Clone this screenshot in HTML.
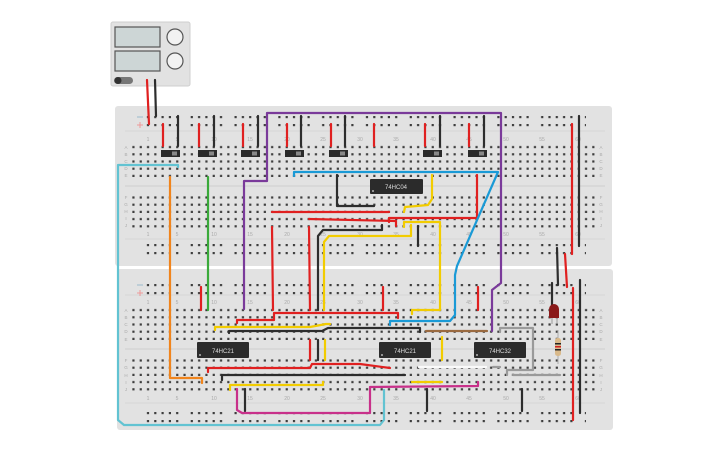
<!DOCTYPE html>
<html><head><meta charset="utf-8"><style>
html,body{margin:0;padding:0;background:#fff;width:725px;height:453px;overflow:hidden}
svg{display:block}
text{font-family:"Liberation Sans",sans-serif}
</style></head><body>
<svg width="725" height="453" viewBox="0 0 725 453" xmlns="http://www.w3.org/2000/svg">
<defs>
<pattern id="th" patternUnits="userSpaceOnUse" x="144.35" y="143.4" width="7.3" height="7.2"><rect x="2.6" y="2.6" width="2.2" height="2.2" fill="#3d3d3d"/></pattern>
<pattern id="th2" patternUnits="userSpaceOnUse" x="144.35" y="306.4" width="7.3" height="7.2"><rect x="2.6" y="2.6" width="2.2" height="2.2" fill="#3d3d3d"/></pattern>
<pattern id="rl" patternUnits="userSpaceOnUse" x="146.6" y="114" width="43.8" height="8"><g fill="#3d3d3d"><rect x="0.3" y="2" width="2.2" height="2.2"/><rect x="7.6" y="2" width="2.2" height="2.2"/><rect x="14.9" y="2" width="2.2" height="2.2"/><rect x="22.2" y="2" width="2.2" height="2.2"/><rect x="29.5" y="2" width="2.2" height="2.2"/></g></pattern>
</defs>
<!-- power supply -->
<rect x="111" y="22" width="79" height="64" rx="2" fill="#e2e2e2" stroke="#cfcfcf"/>
<rect x="115" y="27" width="45" height="20" fill="#cdd6d6" stroke="#555" stroke-width="1.2"/>
<rect x="115" y="51" width="45" height="20" fill="#cdd6d6" stroke="#555" stroke-width="1.2"/>
<circle cx="175" cy="37" r="8" fill="#f2f2f2" stroke="#555" stroke-width="1.2"/>
<circle cx="175" cy="61" r="8" fill="#f2f2f2" stroke="#555" stroke-width="1.2"/>
<rect x="114" y="77" width="19" height="7" rx="3.5" fill="#777"/><circle cx="118" cy="80.5" r="3.5" fill="#333"/>
<!-- boards -->
<rect x="115" y="106" width="497" height="160" rx="3" fill="#e2e2e2"/>
<rect x="117" y="269" width="496" height="161" rx="3" fill="#e2e2e2"/>
<g stroke="#d2d2d2" stroke-width="0.8">
<line x1="125" y1="131" x2="605" y2="131"/><line x1="125" y1="239" x2="605" y2="239"/>
<line x1="125" y1="295" x2="605" y2="295"/><line x1="125" y1="403" x2="605" y2="403"/>
</g>
<rect x="125" y="185" width="480" height="2" fill="#d8d8d8"/>
<rect x="125" y="348" width="480" height="2" fill="#d8d8d8"/>
<!-- holes -->
<rect x="130" y="143" width="467" height="36" fill="url(#th)"/>
<rect x="130" y="193.5" width="467" height="36" fill="url(#th)"/>
<rect x="130" y="306" width="467" height="36" fill="url(#th2)"/>
<rect x="130" y="356.5" width="467" height="36" fill="url(#th2)"/>
<g fill="url(#rl)">
<rect x="146" y="114" width="440" height="16"/>
<rect x="146" y="242" width="440" height="16" transform="translate(0,0)"/>
<rect x="146" y="280" width="440" height="16"/>
<rect x="146" y="407" width="440" height="16"/>
</g>
<g fill="#3d3d3d">
<rect x="146" y="243" width="0" height="0"/>
</g>
<g stroke-width="1" fill="none">
<line x1="137" y1="117" x2="143" y2="117" stroke="#9bc"/><line x1="137" y1="125" x2="143" y2="125" stroke="#e99"/><line x1="140" y1="122" x2="140" y2="128" stroke="#e99"/>
<line x1="137" y1="285" x2="143" y2="285" stroke="#9bc"/><line x1="137" y1="293" x2="143" y2="293" stroke="#e99"/><line x1="140" y1="290" x2="140" y2="296" stroke="#e99"/>
</g>
<g font-size="5" fill="#aaa" text-anchor="middle">
<text x="148" y="141">1</text><text x="177" y="141">5</text><text x="214" y="141">10</text><text x="250" y="141">15</text><text x="287" y="141">20</text><text x="323" y="141">25</text><text x="360" y="141">30</text><text x="396" y="141">35</text><text x="433" y="141">40</text><text x="469" y="141">45</text><text x="506" y="141">50</text><text x="542" y="141">55</text><text x="578" y="141">60</text>
<text x="148" y="236">1</text><text x="177" y="236">5</text><text x="214" y="236">10</text><text x="250" y="236">15</text><text x="287" y="236">20</text><text x="323" y="236">25</text><text x="360" y="236">30</text><text x="396" y="236">35</text><text x="433" y="236">40</text><text x="469" y="236">45</text><text x="506" y="236">50</text><text x="542" y="236">55</text><text x="578" y="236">60</text>
<text x="148" y="304">1</text><text x="177" y="304">5</text><text x="214" y="304">10</text><text x="250" y="304">15</text><text x="287" y="304">20</text><text x="323" y="304">25</text><text x="360" y="304">30</text><text x="396" y="304">35</text><text x="433" y="304">40</text><text x="469" y="304">45</text><text x="506" y="304">50</text><text x="542" y="304">55</text><text x="578" y="304">60</text>
<text x="148" y="400">1</text><text x="177" y="400">5</text><text x="214" y="400">10</text><text x="250" y="400">15</text><text x="287" y="400">20</text><text x="323" y="400">25</text><text x="360" y="400">30</text><text x="396" y="400">35</text><text x="433" y="400">40</text><text x="469" y="400">45</text><text x="506" y="400">50</text><text x="542" y="400">55</text><text x="578" y="400">60</text>
</g>
<g font-size="4.5" fill="#aaa" text-anchor="middle">
<text x="126" y="149">A</text><text x="126" y="156">B</text><text x="126" y="163">C</text><text x="126" y="170">D</text><text x="126" y="177">E</text>
<text x="126" y="199">F</text><text x="126" y="206">G</text><text x="126" y="213">H</text><text x="126" y="220">I</text><text x="126" y="227">J</text>
<text x="601" y="149">A</text><text x="601" y="156">B</text><text x="601" y="163">C</text><text x="601" y="170">D</text><text x="601" y="177">E</text>
<text x="601" y="199">F</text><text x="601" y="206">G</text><text x="601" y="213">H</text><text x="601" y="220">I</text><text x="601" y="227">J</text>
<text x="126" y="312">A</text><text x="126" y="319">B</text><text x="126" y="326">C</text><text x="126" y="333">D</text><text x="126" y="341">E</text>
<text x="126" y="362">F</text><text x="126" y="369">G</text><text x="126" y="377">H</text><text x="126" y="384">I</text><text x="126" y="391">J</text>
<text x="601" y="312">A</text><text x="601" y="319">B</text><text x="601" y="326">C</text><text x="601" y="333">D</text><text x="601" y="341">E</text>
<text x="601" y="362">F</text><text x="601" y="369">G</text><text x="601" y="377">H</text><text x="601" y="384">I</text><text x="601" y="391">J</text>
</g>
<!-- switches -->
<g>
<g fill="#2a2a2a"><rect x="161" y="150" width="19" height="7"/><rect x="198" y="150" width="19" height="7"/><rect x="241" y="150" width="19" height="7"/><rect x="285" y="150" width="19" height="7"/><rect x="329" y="150" width="19" height="7"/><rect x="423" y="150" width="19" height="7"/><rect x="468" y="150" width="19" height="7"/></g>
<g fill="#888"><rect x="172" y="151.5" width="5" height="4"/><rect x="209" y="151.5" width="5" height="4"/><rect x="252" y="151.5" width="5" height="4"/><rect x="296" y="151.5" width="5" height="4"/><rect x="340" y="151.5" width="5" height="4"/><rect x="434" y="151.5" width="5" height="4"/><rect x="479" y="151.5" width="5" height="4"/></g>
</g>
<!-- chips -->
<g>
<rect x="370" y="179" width="53" height="15" rx="1" fill="#2b2b2b"/><text x="396" y="189" font-size="6" fill="#ddd" text-anchor="middle">74HC04</text>
<rect x="197" y="342" width="52" height="16" rx="1" fill="#2b2b2b"/><text x="223" y="353" font-size="6" fill="#ddd" text-anchor="middle">74HC21</text>
<rect x="379" y="342" width="52" height="16" rx="1" fill="#2b2b2b"/><text x="405" y="353" font-size="6" fill="#ddd" text-anchor="middle">74HC21</text>
<rect x="474" y="342" width="52" height="16" rx="1" fill="#2b2b2b"/><text x="500" y="353" font-size="6" fill="#ddd" text-anchor="middle">74HC32</text>
<g fill="#ddd"><circle cx="373" cy="191" r="0.9"/><circle cx="200" cy="355" r="0.9"/><circle cx="382" cy="355" r="0.9"/><circle cx="477" cy="355" r="0.9"/></g>
</g>
<!-- wires -->
<g fill="none" stroke-width="2.2" stroke-linejoin="round" stroke-linecap="round">
<!-- power supply leads -->
<polyline points="147,80 149,124" stroke="#e02020"/>
<polyline points="155,80 156,116" stroke="#2d2d2d"/>
<!-- switch power -->
<g stroke="#e02020"><line x1="163" y1="124" x2="163" y2="146"/><line x1="199" y1="124" x2="199" y2="146"/><line x1="243" y1="124" x2="243" y2="146"/><line x1="287" y1="124" x2="287" y2="146"/><line x1="331" y1="124" x2="331" y2="146"/><line x1="374" y1="124" x2="374" y2="146"/><line x1="425" y1="124" x2="425" y2="146"/><line x1="469" y1="124" x2="469" y2="146"/>
<line x1="572" y1="124" x2="572" y2="254"/><line x1="565" y1="254" x2="567" y2="287"/><line x1="573" y1="288" x2="573" y2="420"/>
<line x1="477" y1="175" x2="477" y2="212"/><polyline points="477,212 477,218 389,218 389,222"/><line x1="272" y1="212" x2="389" y2="212"/>
<polyline points="309,219 396,221 396,226"/>
<line x1="272" y1="227" x2="273" y2="310"/><line x1="309" y1="227" x2="310" y2="310"/>
<line x1="310" y1="340" x2="310" y2="360"/>
<line x1="201" y1="287" x2="201" y2="310"/><line x1="383" y1="287" x2="383" y2="310"/><line x1="478" y1="287" x2="478" y2="310"/>
<polyline points="237,323 237,320 274,320 274,313 398,313 398,318"/>
<polyline points="208,372 208,368 310,368 312,364 360,364 390,368"/>
</g>
<g stroke="#2d2d2d"><line x1="178" y1="116" x2="178" y2="146"/><line x1="214" y1="116" x2="214" y2="146"/><line x1="258" y1="116" x2="258" y2="146"/><line x1="301" y1="116" x2="301" y2="146"/><line x1="345" y1="116" x2="345" y2="146"/><line x1="440" y1="116" x2="440" y2="146"/><line x1="484" y1="116" x2="484" y2="146"/>
<line x1="579" y1="116" x2="579" y2="246"/><line x1="557" y1="248" x2="558" y2="285"/><line x1="580" y1="280" x2="580" y2="413"/>
<polyline points="337,175 337,206 374,206"/>
<polyline points="318,310 318,236 323,230 382,230 382,225"/>
<line x1="418" y1="226" x2="418" y2="246"/>
<line x1="318" y1="340" x2="318" y2="360"/>
<polyline points="229,333 229,331 322,331 328,328 420,328 420,332"/>
<polyline points="222,380 222,375 405,375"/>
<line x1="245" y1="389" x2="245" y2="411"/><line x1="427" y1="389" x2="427" y2="411"/><line x1="522" y1="389" x2="522" y2="411"/>
<line x1="552" y1="283" x2="552" y2="305"/>
</g>
<g stroke="#f2cc00">
<polyline points="432,175 432,199 428,205 405,207 404,212"/>
<polyline points="404,227 404,222 440,222 440,310 412,310 412,314"/>
<polyline points="324,310 324,242 329,236 411,236 411,225"/>
<line x1="325" y1="340" x2="325" y2="360"/>
<polyline points="215,330 215,327 310,327 326,324 330,324"/>
<line x1="442" y1="337" x2="442" y2="360"/>
<polyline points="230,390 230,385 323,385 323,382"/>
<line x1="412" y1="382" x2="442" y2="382"/>
</g>
<polyline points="244,309 244,181 267,181 267,113 501,113 501,283 492,290 492,331" stroke="#7a3a9a"/>
<polyline points="178,167 178,165 118,165 118,420 124,425 380,425 384,420 384,390" stroke="#62c3d2"/>
<polyline points="294,176 294,172 498,172 457,266 455,275 455,315 450,321 390,321 390,325" stroke="#1a9ad6"/>
<polyline points="170,177 170,378 202,378 202,383" stroke="#f0841c"/>
<line x1="208" y1="177" x2="208" y2="310" stroke="#3aaa3a"/>
<polyline points="237,389 237,410 242,413 370,413 370,387 478,386 478,382" stroke="#c8308a"/>
<line x1="426" y1="331" x2="487" y2="331" stroke="#9a6a40"/>
<polyline points="500,332 500,328 533,328 533,370 507,370 507,375" stroke="#9a9a9a"/>
<line x1="513" y1="375" x2="560" y2="375" stroke="#9a9a9a"/>
<line x1="493" y1="367" x2="500" y2="367" stroke="#9a9a9a"/>
<line x1="419" y1="367" x2="486" y2="367" stroke="#fafafa"/>
</g>
<!-- LED & resistor -->
<line x1="552" y1="316" x2="552" y2="324" stroke="#999" stroke-width="1"/><line x1="557" y1="316" x2="557" y2="324" stroke="#999" stroke-width="1"/>
<path d="M549,318 L549,309 A5,5 0 0 1 559,309 L559,318 Z" fill="#8a1a1a"/>
<line x1="558" y1="330" x2="558" y2="364" stroke="#aaa" stroke-width="1"/>
<rect x="555" y="338" width="6" height="18" rx="2.5" fill="#d9b98a"/>
<rect x="555" y="343" width="6" height="1.5" fill="#222"/><rect x="555" y="346" width="6" height="1.5" fill="#d02020"/><rect x="555" y="349" width="6" height="1.5" fill="#222"/>
</svg>
</body></html>
